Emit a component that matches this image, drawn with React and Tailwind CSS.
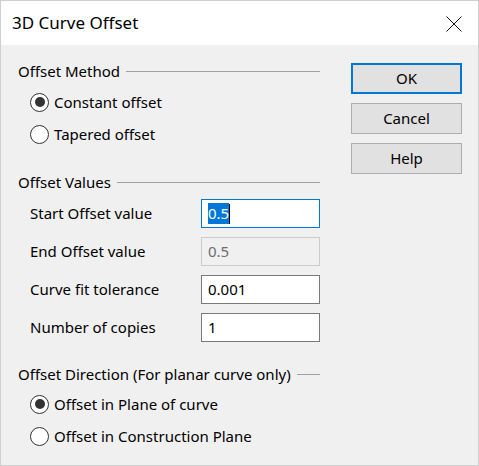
import React from "react";

const font = { fontFamily: '"Noto Sans", "Liberation Sans", sans-serif' };

function GroupHeader({ children }) {
  return (
    <div className="flex h-[20px] items-center">
      <span className="whitespace-nowrap">{children}</span>
      <div className="ml-[6px] h-px flex-1 bg-[#a0a0a0]" />
    </div>
  );
}

function Radio({ label, checked }) {
  return (
    <div className="flex h-[32px] items-center pl-[12px]">
      <span className="flex h-[19px] w-[19px] items-center justify-center rounded-full border border-[#333] bg-white">
        {checked && <span className="h-[10px] w-[10px] rounded-full bg-[#333]" />}
      </span>
      <span className="ml-[5px] whitespace-nowrap">{label}</span>
    </div>
  );
}

function Field({ label, value, focused, disabled }) {
  return (
    <div className="flex h-[29px] items-center pl-[12px]">
      <span className="w-[171px] whitespace-nowrap">{label}</span>
      <div
        className={
          focused
            ? "flex h-[29px] w-[119px] items-center border border-[#0078d7] bg-white pl-[6px]"
            : disabled
            ? "flex h-[29px] w-[119px] items-center border border-[#cccccc] bg-[#f0f0f0] pl-[6px] text-[#6d6d6d]"
            : "flex h-[29px] w-[119px] items-center border border-[#7a7a7a] bg-white pl-[6px]"
        }
      >
        {focused ? (
          <>
            <span className="bg-[#0078d7] leading-[21px] text-white">{value}</span>
            <span className="h-[20px] w-px bg-black" />
          </>
        ) : (
          <span>{value}</span>
        )}
      </div>
    </div>
  );
}

function Button({ children, primary }) {
  return (
    <div
      className={
        primary
          ? "flex h-[31px] w-[111px] items-center justify-center border-2 border-[#0078d7] bg-[#e1e1e1]"
          : "flex h-[31px] w-[111px] items-center justify-center border border-[#adadad] bg-[#e1e1e1]"
      }
    >
      {children}
    </div>
  );
}

export default function App() {
  return (
    <div
      className="h-[466px] w-[479px] overflow-hidden border border-[#cfcfcf] bg-[#f0f0f0] text-[15px] text-black"
      style={font}
    >
      {/* title bar */}
      <div className="flex h-[44px] items-center justify-between bg-white pl-[11px] pr-[16px]">
        <span className="text-[17px]">3D Curve Offset</span>
        <svg width="16" height="16" viewBox="0 0 16 16" className="mt-[1px]">
          <path d="M0.5 0.5 L15.5 15.5 M15.5 0.5 L0.5 15.5" stroke="#111" strokeWidth="1" fill="none" />
        </svg>
      </div>

      <div className="flex">
        <div className="flex w-[319px] flex-col pl-[17px] pt-[16px]">
          <GroupHeader>Offset Method</GroupHeader>
          <div className="mt-[5px]">
            <Radio label="Constant offset" checked />
            <Radio label="Tapered offset" />
          </div>

          <div className="mt-[22px]">
            <GroupHeader>Offset Values</GroupHeader>
          </div>
          <div className="mt-[7px] flex flex-col gap-[9px]">
            <Field label="Start Offset value" value="0.5" focused />
            <Field label="End Offset value" value="0.5" disabled />
            <Field label="Curve fit tolerance" value="0.001" />
            <Field label="Number of copies" value="1" />
          </div>

          <div className="mt-[22px]">
            <GroupHeader>Offset Direction (For planar curve only)</GroupHeader>
          </div>
          <div className="mt-[4px]">
            <Radio label="Offset in Plane of curve" checked />
            <Radio label="Offset in Construction Plane" />
          </div>
        </div>

        <div className="ml-[31px] flex flex-col gap-[9px] pt-[18px]">
          <Button primary>OK</Button>
          <Button>Cancel</Button>
          <Button>Help</Button>
        </div>
      </div>
    </div>
  );
}
